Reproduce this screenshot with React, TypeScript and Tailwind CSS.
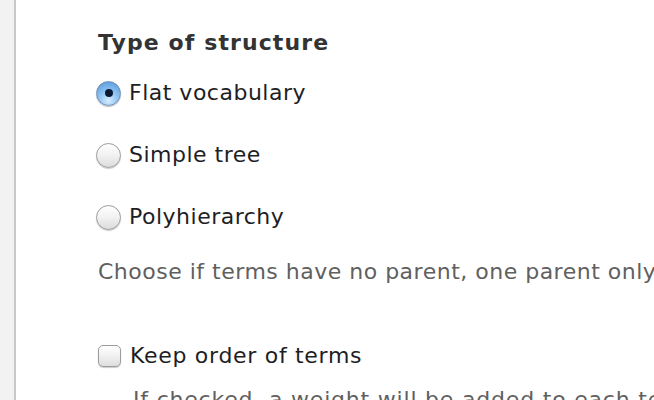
import React from "react";

const font = { fontFamily: '"DejaVu Sans", Verdana, sans-serif' };

const Radio = ({checked}: {checked?: boolean}) =>
    checked ? (
        <span className="relative flex h-[25px] w-[25px] shrink-0 items-center justify-center rounded-full border border-[#6f8fb3] bg-[radial-gradient(circle_at_50%_80%,#d6ecff_0%,#8cc3f2_45%,#4f93d8_100%)] shadow-[0_1px_1px_rgba(0,0,0,0.25)]">
            <span className="h-[8px] w-[8px] rounded-full bg-[#0b1a33]" />
        </span>
    ) : (
        <span className="h-[25px] w-[25px] shrink-0 rounded-full border border-[#9c9c9c] bg-[linear-gradient(#ffffff,#f1f1f1_50%,#dcdcdc)] shadow-[0_1px_1px_rgba(0,0,0,0.2)]" />
    );

const RadioRow = ({label, checked, className}: {label: string; checked?: boolean; className?: string}) => (
    <label className={`flex items-center gap-[8px] ${className ?? ""}`}>
        <Radio checked={checked} />
        <span className="text-[22px] leading-[26px] tracking-[0.5px] text-[#1e1e24]">{label}</span>
    </label>
);

export default function App() {
    return (
        <div className="flex h-[400px] w-[654px] overflow-hidden bg-white" style={font}>
            <div className="w-[16px] shrink-0 border-r-2 border-[#c8c8c8] bg-[#f2f2f2]" />
            <div className="flex min-w-0 flex-1 flex-col pl-[82px] pt-[30px]">
                <h2 className="whitespace-nowrap text-[22px] font-bold leading-[26px] tracking-[1.1px] text-[#333]">Type of structure</h2>
                <RadioRow label="Flat vocabulary" checked className="mt-[24px] -ml-[2px]" />
                <RadioRow label="Simple tree" className="mt-[36px] -ml-[2px]" />
                <RadioRow label="Polyhierarchy" className="mt-[36px] -ml-[2px]" />
                <p className="mt-[29px] whitespace-nowrap text-[22px] leading-[25px] tracking-[0.5px] text-[#606060]">
                    Choose if terms have no parent, one parent only, or several parents.
                </p>
                <label className="mt-[59px] flex items-center gap-[9px]">
                    <span className="h-[22px] w-[23px] shrink-0 rounded-[5px] border border-[#9c9c9c] bg-[linear-gradient(#ffffff,#f0f0f0_50%,#dedede)] shadow-[0_1px_1px_rgba(0,0,0,0.2)]" />
                    <span className="text-[22px] leading-[25px] tracking-[0.7px] text-[#1e1e24]">Keep order of terms</span>
                </label>
                <p className="ml-[35px] mt-[19px] whitespace-nowrap text-[22px] leading-[25px] tracking-[0.8px] text-[#606060]">
                    If checked, a weight will be added to each term to keep its order.
                </p>
            </div>
        </div>
    );
}
